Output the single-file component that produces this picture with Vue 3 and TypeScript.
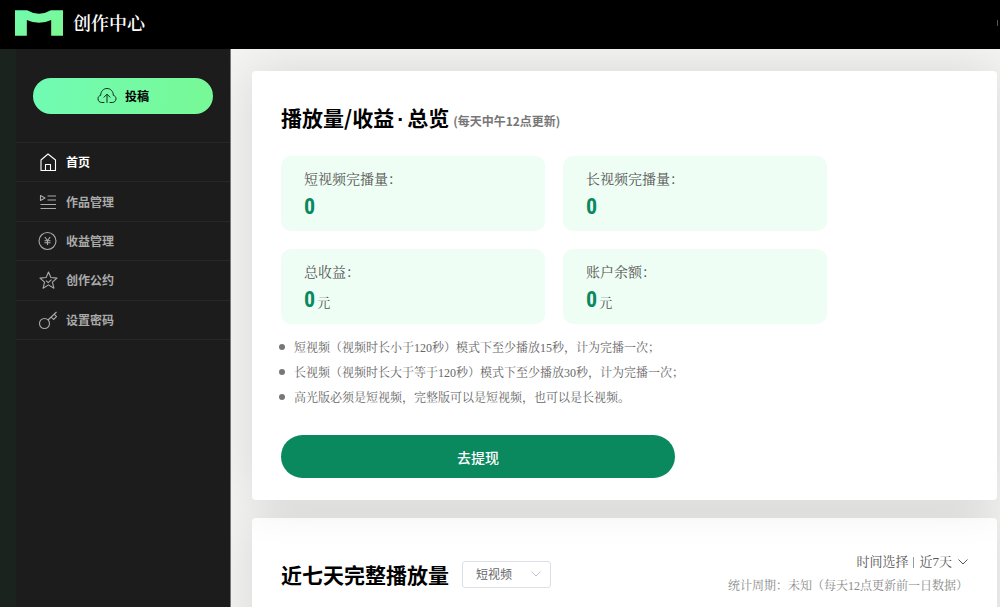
<script setup lang="ts">
import { ref } from 'vue'

interface MenuItem {
  id: string
  label: string
}
interface Stat {
  label: string
  value: number
  unit?: string
}

const menu: MenuItem[] = [
  { id: 'home', label: '首页' },
  { id: 'works', label: '作品管理' },
  { id: 'income', label: '收益管理' },
  { id: 'rules', label: '创作公约' },
  { id: 'password', label: '设置密码' },
]
const active = ref('home')

const stats: Stat[] = [
  { label: '短视频完播量：', value: 0 },
  { label: '长视频完播量：', value: 0 },
  { label: '总收益：', value: 0, unit: '元' },
  { label: '账户余额：', value: 0, unit: '元' },
]

const notes: string[] = [
  '短视频（视频时长小于120秒）模式下至少播放15秒，计为完播一次；',
  '长视频（视频时长大于等于120秒）模式下至少播放30秒，计为完播一次；',
  '高光版必须是短视频，完整版可以是短视频，也可以是长视频。',
]

const videoType = ref('short')
</script>

<template>
  <div class="page">
    <header class="topbar">
      <svg class="logo" viewBox="0 0 142 76" aria-hidden="true">
        <defs>
          <linearGradient id="logoFill" x1="0" y1="0" x2="1" y2="1">
            <stop offset="0" stop-color="#70fbb0" />
            <stop offset="1" stop-color="#7cf88e" />
          </linearGradient>
        </defs>
        <path fill="url(#logoFill)" d="M0 0H36Q71 21 106 0H142V76H107V29Q71 46 35 29V76H0Z" />
      </svg>
      <span class="brand">创作中心</span>
      <i class="edge"></i>
    </header>

    <div class="body">
      <aside class="sidebar">
        <button class="upload" type="button">
          <svg width="20" height="18" viewBox="0 0 20 18" fill="none" stroke="currentColor" stroke-linecap="round" stroke-linejoin="round" aria-hidden="true">
            <path d="M7 15.5H4.800C2.600 15.500 1 13.900 1 11.800c0-1.800 1.100-3.100 2.700-3.500C3.700 4.400 6.400 1.500 10 1.500s6.300 2.900 6.300 6.800c1.600.4 2.700 1.700 2.700 3.500 0 2.100-1.600 3.700-3.800 3.700H13" />
            <path d="M10 15.500V7.500M7 10.200l3-3 3 3" />
          </svg>
          <span>投稿</span>
        </button>

        <nav class="menu">
          <a v-for="item in menu" :key="item.id" href="#" class="item" :class="{ active: active === item.id }" @click.prevent="active = item.id">
            <svg width="20" height="20" viewBox="0 0 20 20" fill="none" stroke="currentColor" stroke-width="1.100" stroke-linejoin="round" aria-hidden="true">
              <template v-if="item.id === 'home'">
                <path d="M3 18.500V8L10 2l7.500 6v10.500Z" />
                <path d="M7.500 18.500v-6h5v6" />
              </template>
              <template v-else-if="item.id === 'works'">
                <path d="M2.500 3.500v5L7 6ZM9.500 4H18M9.500 8H18M2.500 12.500H18M2.500 16.500H18" />
              </template>
              <template v-else-if="item.id === 'income'">
                <circle cx="9.500" cy="10" r="8.500" />
                <path d="M6.800 6l2.700 3.500L12.200 6M9.500 9.500V14M6.500 9.700h6M6.500 11.800h6" />
              </template>
              <template v-else-if="item.id === 'rules'">
                <path d="M10.500 2l2.400 5.500 6.100.6-4.600 4 1.500 6.100-5.400-3.300-5.400 3.300 1.500-6.100-4.600-4 6.100-.6Z" />
                <path d="M8 10.700l2.200 2 3.300-3" />
              </template>
              <template v-else>
                <circle cx="6.500" cy="13.500" r="5" />
                <path d="M10 10l8.500-8M13.200 7l2.300 2.500 3-2.800-2.300-2.500" />
              </template>
            </svg>
            <span>{{ item.label }}</span>
          </a>
        </nav>
      </aside>

      <main class="content">
        <section class="card overview">
          <h2 class="title">播放量/收益<span class="dot">·</span>总览<small>(每天中午12点更新)</small></h2>
          <div class="stats">
            <div v-for="stat in stats" :key="stat.label" class="stat">
              <div class="stat-label">{{ stat.label }}</div>
              <div class="stat-value"><b>{{ stat.value }}</b><span v-if="stat.unit">{{ stat.unit }}</span></div>
            </div>
          </div>
          <ul class="notes">
            <li v-for="note in notes" :key="note">{{ note }}</li>
          </ul>
          <button class="withdraw" type="button">去提现</button>
        </section>

        <section class="card trend">
          <div class="trend-left">
            <h2 class="title">近七天完整播放量</h2>
            <div class="picker">
              <select v-model="videoType" aria-label="视频类型">
                <option value="short">短视频</option>
                <option value="long">长视频</option>
              </select>
              <svg class="chevron" width="10" height="6" viewBox="0 0 10 6" fill="none" stroke="currentColor" aria-hidden="true"><path d="M.5.5L5 5 9.500.5" /></svg>
            </div>
          </div>
          <div class="trend-right">
            <button class="range" type="button">
              <span>时间选择</span><i></i><span>近7天</span>
              <svg width="10" height="6" viewBox="0 0 10 6" fill="none" stroke="currentColor" aria-hidden="true"><path d="M.5.5L5 5 9.500.5" /></svg>
            </button>
            <p class="period">统计周期：未知（每天12点更新前一日数据）</p>
          </div>
        </section>
      </main>
    </div>
  </div>
</template>

<style>
body {
  margin: 0;
}
</style>

<style scoped>
.page {
  --sans: "Noto Sans CJK SC", sans-serif;
  --serif: "Liberation Serif", "Noto Serif CJK SC", "Noto Sans CJK SC", serif;
  display: flex;
  flex-direction: column;
  height: 100vh;
  overflow: hidden;
  font-family: var(--serif);
  color: #555;
}
.page * {
  box-sizing: border-box;
}
.topbar {
  display: flex;
  flex: none;
  align-items: center;
  height: 49px;
  padding: 0 2px 4px 15px;
  background: #000;
}
.logo {
  width: 48px;
  height: 26px;
}
.brand {
  margin-left: 10px;
  padding-top: 2px;
  color: #fff;
  font-size: 18px;
  font-weight: 600;
  line-height: 24px;
}
.edge {
  width: 1px;
  height: 6px;
  margin-left: auto;
  background: #555;
}
.body {
  display: flex;
  flex: 1;
  min-height: 0;
}
.sidebar {
  flex: none;
  width: 231px;
  padding-top: 29px;
  border-left: 16px solid #1b231e;
  border-right: 1px solid #777;
  background: #1c1c1c;
  font-family: var(--sans);
}
.upload {
  display: flex;
  align-items: center;
  justify-content: center;
  gap: 8px;
  width: 180px;
  height: 36px;
  margin: 0 0 28px 17px;
  padding: 0;
  border: 0;
  border-radius: 18px;
  background: linear-gradient(100deg, #70fbb4, #78f996);
  color: #10291b;
  font: 700 12px/18px var(--sans);
}
.upload span {
  color: #000;
}
.menu {
  display: grid;
  grid-auto-rows: 1fr;
  height: 198px;
  border-top: 1px solid #272727;
}
.item {
  display: flex;
  align-items: center;
  gap: 8px;
  padding-left: 22px;
  border-bottom: 1px solid #272727;
  color: #aaa;
  font-size: 12px;
  font-weight: 700;
  line-height: 18px;
  text-decoration: none;
}
.item.active {
  color: #fff;
}
.content {
  display: flex;
  flex: 1;
  flex-direction: column;
  gap: 18px;
  min-width: 0;
  padding: 22px 3px 0 21px;
  overflow: hidden;
  background: #f4f4f3;
}
.card {
  flex: none;
  border-radius: 4px;
  background: #fff;
  box-shadow: 0 0 50px rgba(0, 0, 0, 0.12);
}
.overview {
  position: relative;
  z-index: 1;
  padding: 30px 29px 22px;
}
.title {
  margin: 0;
  color: #000;
  font: 700 21px/32px var(--sans);
  white-space: nowrap;
}
.title .dot {
  padding: 0 3px;
  font-family: "Liberation Sans", sans-serif;
}
.title small {
  margin-left: 4px;
  color: #777;
  font-size: 12px;
  font-weight: 700;
}
.stats {
  display: grid;
  grid-template-columns: repeat(2, 264px);
  gap: 18px;
  margin-top: 19px;
}
.stat {
  height: 75px;
  padding: 14px 23px;
  border-radius: 10px;
  background: #effef4;
}
.stat-label {
  font-size: 14px;
  line-height: 20px;
}
.stat-value {
  display: flex;
  align-items: baseline;
  gap: 2px;
  margin-top: 4px;
  font-size: 13px;
  line-height: 26px;
}
.stat-value b {
  color: #0a895f;
  font-family: "Liberation Sans Narrow", "Roboto Condensed", "Open Sans Condensed", Roboto, sans-serif;
  font-size: 22px;
}
.notes {
  margin: 12px 0 0;
  padding: 0 0 0 13px;
  color: #666;
  font-size: 12px;
  line-height: 25px;
  list-style: none;
}
.notes li {
  display: flex;
  align-items: center;
  white-space: nowrap;
}
.notes li::before {
  flex: none;
  width: 6px;
  height: 6px;
  margin: 0 9px 4px -15px;
  border-radius: 50%;
  background: #777;
  content: "";
}
.withdraw {
  display: block;
  width: 394px;
  height: 43px;
  margin-top: 24px;
  padding: 0;
  border: 0;
  border-radius: 22px;
  background: #0a895f;
  color: #fff;
  font: 500 14px/20px var(--sans);
}
.trend {
  display: flex;
  justify-content: space-between;
  height: 400px;
  padding: 33px 29px 0;
}
.trend-left {
  display: flex;
  gap: 13px;
  align-items: center;
  height: 46px;
}
.picker {
  position: relative;
  width: 89px;
}
.picker select {
  display: block;
  width: 100%;
  height: 27px;
  padding: 0 13px;
  border: 1px solid #dcdfe6;
  border-radius: 3px;
  appearance: none;
  background: #fff;
  color: #666;
  font: 400 12px/18px var(--sans);
}
.chevron {
  position: absolute;
  top: 10px;
  right: 10px;
  color: #c0c4cc;
  pointer-events: none;
}
.trend-right {
  display: flex;
  flex-direction: column;
  align-items: flex-end;
}
.range {
  display: flex;
  align-items: center;
  height: 22px;
  padding: 0;
  border: 0;
  background: none;
  color: #555;
  font: 400 13px/22px var(--serif);
}
.range i {
  width: 1px;
  height: 11px;
  margin: 0 5px;
  background: #999;
}
.range svg {
  margin-left: 6px;
}
.period {
  margin: 2px 0 0;
  color: #888;
  font-size: 12px;
  line-height: 22px;
}
</style>
